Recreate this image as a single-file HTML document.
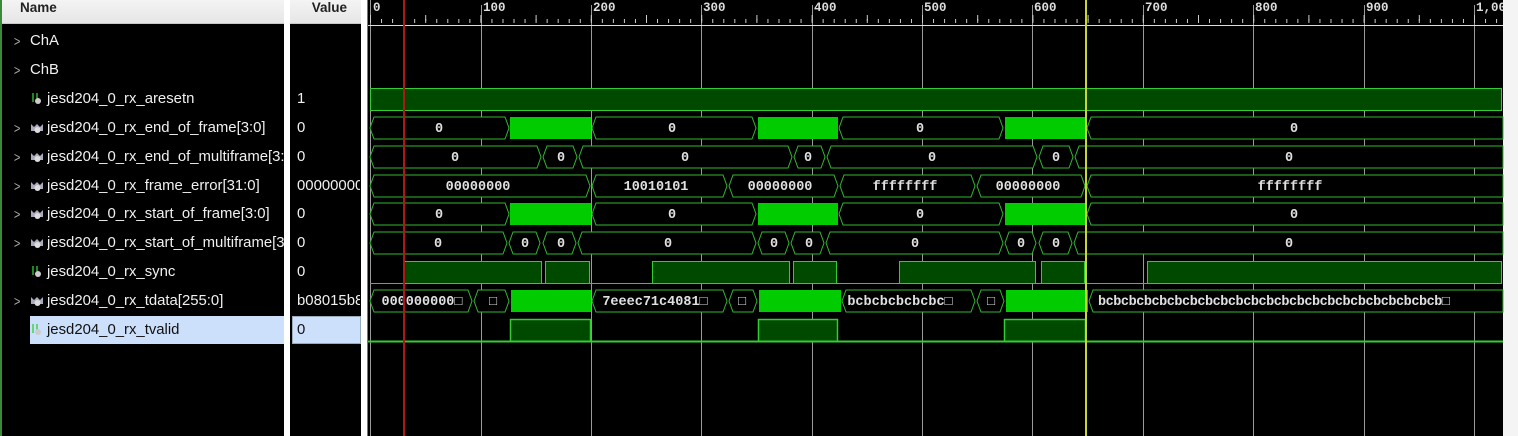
<!DOCTYPE html>
<html><head><meta charset="utf-8"><style>
*{margin:0;padding:0;box-sizing:border-box}
body{width:1518px;height:436px;overflow:hidden;background:#000;position:relative;font-family:"Liberation Sans",sans-serif}
.hdr{position:absolute;top:0;height:24px;background:linear-gradient(#f4f4f4,#e6e6e6);border-bottom:1px solid #c8c8c8;font-weight:bold;font-size:13.5px;color:#222;line-height:16px}
.row{position:absolute;left:0;height:28px;line-height:28px;color:#f0f0f0;font-size:14.9px;white-space:nowrap}
.chev{position:absolute;left:13px;color:#aaa;font-size:14px;transform:scaleX(0.8)}
.val{position:absolute;left:297px;color:#f0f0f0;font-size:14.9px;line-height:28px;height:28px;white-space:nowrap;width:63px;overflow:hidden}
.ic{position:absolute;left:31px;top:8px;width:12px;height:12px}
</style></head><body>
<div style="position:absolute;left:0;top:0;width:2px;height:436px;background:#3a8a3a"></div>
<div class="hdr" style="left:2px;width:282px;padding:0 0 0 18px">Name</div>
<div style="position:absolute;left:284px;top:0;width:6px;height:436px;background:#fff"></div>
<div class="hdr" style="left:290px;width:71px;text-align:right;padding-right:14px">Value</div>
<div style="position:absolute;left:361px;top:0;width:6px;height:436px;background:#fff"></div>
<div style="position:absolute;left:367px;top:0;width:1px;height:436px;background:#777"></div>

<div style="position:absolute;left:30px;top:316px;width:254px;height:28px;background:#cde0fb"></div>
<div style="position:absolute;left:292px;top:316px;width:69px;height:28px;background:#cde0fb;border:1px solid #9ab"></div>

<div class="row" style="top:27px"><span class="chev">&gt;</span><span style="position:absolute;left:30px">ChA</span></div>
<div class="row" style="top:56px"><span class="chev">&gt;</span><span style="position:absolute;left:30px">ChB</span></div>

<svg width="0" height="0" style="position:absolute"><defs>
<g id="bin"><path d="M2 0v9M6 0v9" stroke="#3c3" stroke-width="1.3"/><circle cx="7" cy="8" r="3" fill="#ccc"/></g>
<g id="bus"><path d="M0 2l3 3 3-3 3 3 3-3v7H0z" fill="#aab"/><circle cx="6.5" cy="8" r="3" fill="#ddd"/></g>
</defs></svg>

<div class="row" style="top:85px"><svg class="ic"><use href="#bin"/></svg><span style="position:absolute;left:47px">jesd204_0_rx_aresetn</span></div>
<div class="val" style="top:85px">1</div>
<div class="row" style="top:114px"><span class="chev">&gt;</span><svg class="ic"><use href="#bus"/></svg><span style="position:absolute;left:47px">jesd204_0_rx_end_of_frame[3:0]</span></div>
<div class="val" style="top:114px">0</div>
<div class="row" style="top:143px"><span class="chev">&gt;</span><svg class="ic"><use href="#bus"/></svg><span style="position:absolute;left:47px;width:237px;overflow:hidden">jesd204_0_rx_end_of_multiframe[3:0]</span></div>
<div class="val" style="top:143px">0</div>
<div class="row" style="top:172px"><span class="chev">&gt;</span><svg class="ic"><use href="#bus"/></svg><span style="position:absolute;left:47px">jesd204_0_rx_frame_error[31:0]</span></div>
<div class="val" style="top:172px">00000000</div>
<div class="row" style="top:200px"><span class="chev">&gt;</span><svg class="ic"><use href="#bus"/></svg><span style="position:absolute;left:47px">jesd204_0_rx_start_of_frame[3:0]</span></div>
<div class="val" style="top:200px">0</div>
<div class="row" style="top:229px"><span class="chev">&gt;</span><svg class="ic"><use href="#bus"/></svg><span style="position:absolute;left:47px;width:237px;overflow:hidden">jesd204_0_rx_start_of_multiframe[3:0]</span></div>
<div class="val" style="top:229px">0</div>
<div class="row" style="top:258px"><svg class="ic"><use href="#bin"/></svg><span style="position:absolute;left:47px">jesd204_0_rx_sync</span></div>
<div class="val" style="top:258px">0</div>
<div class="row" style="top:287px"><span class="chev">&gt;</span><svg class="ic"><use href="#bus"/></svg><span style="position:absolute;left:47px">jesd204_0_rx_tdata[255:0]</span></div>
<div class="val" style="top:287px">b08015b8</div>
<div class="row" style="top:316px;color:#111"><svg class="ic"><use href="#bin"/></svg><span style="position:absolute;left:47px">jesd204_0_rx_tvalid</span></div>
<div class="val" style="top:316px;color:#111">0</div>

<svg style="position:absolute;left:0;top:0" width="1518" height="436">
<g stroke="#9a9a9a" stroke-width="1">
<path d="M370.5 0V436M481.5 5V436M591.5 5V436M701.5 5V436M812.5 5V436M922.5 5V436M1032.5 5V436M1143.5 5V436M1253.5 5V436M1364.5 5V436M1474.5 5V436"/>
</g>
<line x1="368" y1="25.5" x2="1503" y2="25.5" stroke="#ddd"/>
<line x1="370" y1="21" x2="1503" y2="21" stroke="#ccc" stroke-width="4" stroke-dasharray="1 10.04"/>
<line x1="370" y1="18" x2="1503" y2="18" stroke="#ccc" stroke-width="6" stroke-dasharray="1 54.2"/>
<g font-family="Liberation Mono,monospace" font-weight="bold" font-size="12.5" fill="#ddd">
<text x="373" y="11">0</text><text x="483" y="11">100</text><text x="593" y="11">200</text><text x="703" y="11">300</text><text x="814" y="11">400</text><text x="924" y="11">500</text><text x="1034" y="11">600</text><text x="1145" y="11">700</text><text x="1255" y="11">800</text><text x="1366" y="11">900</text><text x="1476" y="11">1,00</text>
</g>
<rect x="1503" y="0" width="15" height="436" fill="#f4f4f4"/>

<rect x="370.5" y="88.5" width="1131" height="22" fill="#004a00" stroke="#3c3"/>

<g fill="#000" stroke="#2fb82f" stroke-width="1">
<path d="M370 128l4-11H505l4 11-4 11H374z M592 128l4-11H752l4 11-4 11H596z M839 128l4-11H999l4 11-4 11H843z M1087 128l4-11H1503V139H1091z"/>
<path d="M370 157l4-11H537l4 11-4 11H374z M543 157l4-11H573l4 11-4 11H547z M579 157l4-11H788l4 11-4 11H583z M794 157l4-11H821l4 11-4 11H798z M827 157l4-11H1033l4 11-4 11H831z M1039 157l4-11H1069l4 11-4 11H1043z M1075 157l4-11H1503V168H1079z"/>
<path d="M370 186l4-11H586l4 11-4 11H374z M592 186l4-11H723l4 11-4 11H596z M729 186l4-11H834l4 11-4 11H733z M840 186l4-11H971l4 11-4 11H844z M977 186l4-11H1081l4 11-4 11H981z M1087 186l4-11H1503V197H1091z"/>
<path d="M370 214l4-11H505l4 11-4 11H374z M592 214l4-11H752l4 11-4 11H596z M839 214l4-11H999l4 11-4 11H843z M1087 214l4-11H1503V225H1091z"/>
<path d="M370 243l4-11H503l4 11-4 11H374z M509 243l4-11H536l4 11-4 11H513z M543 243l4-11H572l4 11-4 11H547z M578 243l4-11H752l4 11-4 11H582z M758 243l4-11H785l4 11-4 11H762z M791 243l4-11H820l4 11-4 11H795z M826 243l4-11H999l4 11-4 11H830z M1005 243l4-11H1032l4 11-4 11H1009z M1039 243l4-11H1068l4 11-4 11H1043z M1074 243l4-11H1503V254H1078z"/>
<path d="M370 301l4-11H468l4 11-4 11H374z M474 301l4-11H505l4 11-4 11H478z M592 301l4-11H723l4 11-4 11H596z M729 301l4-11H753l4 11-4 11H733z M842 301l4-11H971l4 11-4 11H846z M977 301l4-11H1000l4 11-4 11H981z M1089 301l4-11H1503V312H1093z"/>
</g>
<g fill="#00cc00">
<rect x="510" y="117" width="81" height="22"/><rect x="758" y="117" width="80" height="22"/><rect x="1005" y="117" width="81" height="22"/>
<rect x="510" y="203" width="81" height="22"/><rect x="758" y="203" width="80" height="22"/><rect x="1005" y="203" width="81" height="22"/>
<rect x="511" y="290" width="80" height="22"/><rect x="759" y="290" width="82" height="22"/><rect x="1006" y="290" width="82" height="22"/>
</g>
<g fill="#004a00" stroke="#3c3">
<path d="M370 283.5H404.5V261.5H541.5V283.5H545.5V261.5H589.5V283.5H652.5V261.5H789.5V283.5H793.5V261.5H836.5V283.5H899.5V261.5H1035.5V283.5H1041.5V261.5H1084.5V283.5H1147.5V261.5H1501.5V283.5" fill="none"/>
<rect x="404.5" y="261.5" width="137" height="22"/><rect x="545.5" y="261.5" width="44" height="22"/><rect x="652.5" y="261.5" width="137" height="22"/><rect x="793.5" y="261.5" width="43" height="22"/><rect x="899.5" y="261.5" width="136" height="22"/><rect x="1041.5" y="261.5" width="43" height="22"/><rect x="1147.5" y="261.5" width="354" height="22"/>
</g>
<g fill="#004a00" stroke="#3c3" stroke-width="1.5">
<rect x="510.5" y="319.5" width="80" height="22"/><rect x="758.5" y="319.5" width="79" height="22"/><rect x="1004.5" y="319.5" width="81" height="22"/>
<path d="M368 341.5H1503" fill="none" stroke-width="2"/>
</g>

<g font-family="Liberation Mono,monospace" font-weight="bold" font-size="13.5" fill="#e0e0e0" text-anchor="middle">
<text x="439" y="132">0</text><text x="672" y="132">0</text><text x="920" y="132">0</text><text x="1294" y="132">0</text>
<text x="455" y="161">0</text><text x="561" y="161">0</text><text x="685" y="161">0</text><text x="808" y="161">0</text><text x="932" y="161">0</text><text x="1056" y="161">0</text><text x="1289" y="161">0</text>
<text x="478" y="190">00000000</text><text x="656" y="190">10010101</text><text x="780" y="190">00000000</text><text x="905" y="190">ffffffff</text><text x="1028" y="190">00000000</text><text x="1290" y="190">ffffffff</text>
<text x="439" y="218">0</text><text x="672" y="218">0</text><text x="920" y="218">0</text><text x="1294" y="218">0</text>
<text x="438" y="247">0</text><text x="525" y="247">0</text><text x="561" y="247">0</text><text x="668" y="247">0</text><text x="774" y="247">0</text><text x="809" y="247">0</text><text x="915" y="247">0</text><text x="1021" y="247">0</text><text x="1056" y="247">0</text><text x="1289" y="247">0</text>
<text x="422" y="305">000000000□</text><text x="493" y="305">□</text><text x="655" y="305">7eeec71c4081□</text><text x="742" y="305">□</text><text x="900" y="305">bcbcbcbcbcbc□</text><text x="991" y="305">□</text>
<text x="1098" y="305" text-anchor="start" textLength="352">bcbcbcbcbcbcbcbcbcbcbcbcbcbcbcbcbcbcbcbcbcbcb□</text>
</g>
<line x1="404" y1="0" x2="404" y2="436" stroke="#b01818" stroke-width="2"/>
<line x1="1086" y1="0" x2="1086" y2="436" stroke="#c8d830" stroke-width="2"/>
</svg>
</body></html>
